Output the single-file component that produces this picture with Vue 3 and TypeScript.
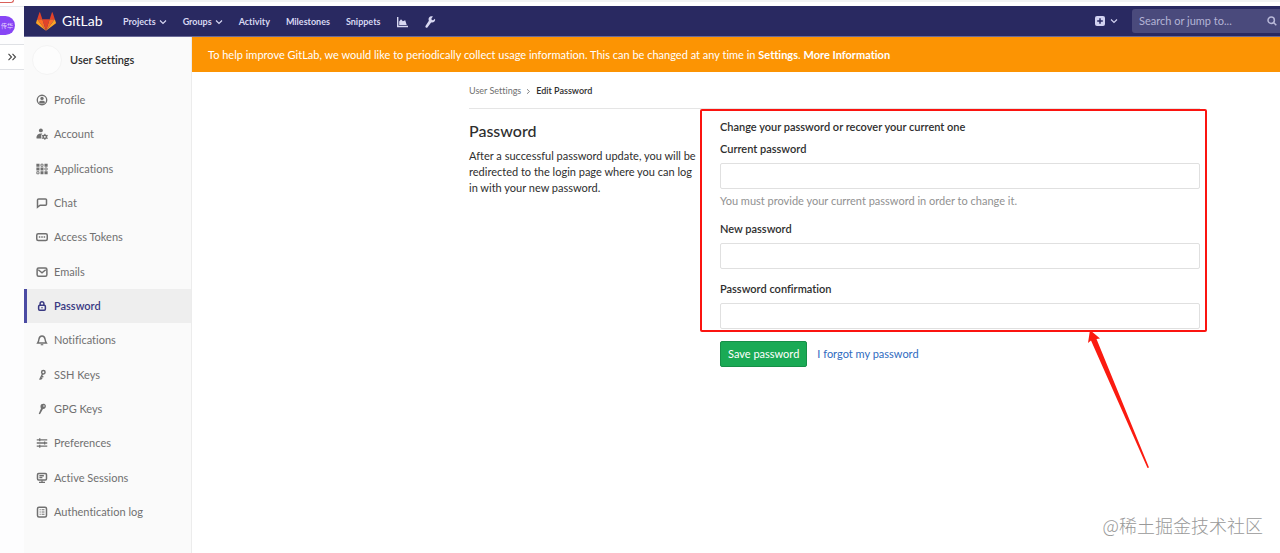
<script setup lang="ts">
import { ref } from 'vue'

interface NavItem {
  label: string
  icon: string
  active?: boolean
}

const topLinks: { label: string; menu: boolean }[] = [
  { label: 'Projects', menu: true },
  { label: 'Groups', menu: true },
  { label: 'Activity', menu: false },
  { label: 'Milestones', menu: false },
  { label: 'Snippets', menu: false },
]

const items: NavItem[] = [
  { label: 'Profile', icon: 'profile' },
  { label: 'Account', icon: 'account' },
  { label: 'Applications', icon: 'applications' },
  { label: 'Chat', icon: 'chat' },
  { label: 'Access Tokens', icon: 'token' },
  { label: 'Emails', icon: 'mail' },
  { label: 'Password', icon: 'lock', active: true },
  { label: 'Notifications', icon: 'bell' },
  { label: 'SSH Keys', icon: 'key' },
  { label: 'GPG Keys', icon: 'gpg' },
  { label: 'Preferences', icon: 'preferences' },
  { label: 'Active Sessions', icon: 'monitor' },
  { label: 'Authentication log', icon: 'log' },
]

const search = ref('')
const current = ref('')
const next = ref('')
const confirmation = ref('')
</script>

<template>
  <div class="window">
    <div class="chrome"><span class="tab"></span><span class="address"></span></div>
    <div class="body">
      <aside class="rail">
        <div class="rail-user"><span class="badge">传华</span></div>
        <button class="expand" type="button" aria-label="Expand">
          <svg width="10" height="10" viewBox="0 0 10 10" fill="none" stroke="#444" stroke-width="1.1"><path d="M1.5 1.8 4.500 5 1.500 8.200M5.500 1.800 8.500 5 5.500 8.200" /></svg>
        </button>
      </aside>
      <div class="app">
        <header class="topbar">
          <a class="brand" href="#">
            <svg width="20" height="19" viewBox="0 0 36 34">
              <path fill="#e24329" d="M18 33.5 24.6 13H11.4z" />
              <path fill="#fc6d26" d="M18 33.5 11.4 13H2.1zM18 33.5 24.6 13h9.3z" />
              <path fill="#fca326" d="M2.1 13 .1 19.2c-.2.6 0 1.2.5 1.5L18 33.5zM33.9 13l2 6.2c.2.6 0 1.2-.5 1.5L18 33.5z" />
              <path fill="#e24329" d="M2.1 13h9.3L7.4.7C7.2.1 6.300.1 6.100.7zM33.900 13h-9.300L28.600.7c.2-.6 1.100-.6 1.300 0z" />
            </svg>
            <span>GitLab</span>
          </a>
          <nav class="links">
            <a v-for="l in topLinks" :key="l.label" href="#">
              {{ l.label }}
              <svg v-if="l.menu" width="8" height="6" viewBox="0 0 8 6" fill="none" stroke="currentColor" stroke-width="1.2"><path d="M1 1.500 4 4.400 7 1.500" /></svg>
            </a>
            <a href="#" aria-label="Instance statistics">
              <svg width="12" height="11" viewBox="0 0 12 11" fill="currentColor"><path d="M1 0h1.400v8.800H12v1.400H1zM3.200 8.100V4.400L5 2.200 6.900 4.300 9.200 3.200l1.500 4.900z" /></svg>
            </a>
            <a href="#" aria-label="Admin area">
              <svg width="12" height="12" viewBox="0 0 16 16" fill="currentColor"><path d="M14.500 3.600 12.200 5.700 10.300 5.200 9.900 3.300 11.900.8C9.900-.1 7.900.3 6.800 2 5.900 3.300 5.900 5 6.500 6.300L2.200 12.900c-.6 1-.5 1.800.2 2.400.8.600 1.700.6 2.400-.3l4.700-6.400c1.600.5 3.200.1 4.400-1.300 1-1.100 1.200-2.500.6-3.700z" /></svg>
            </a>
          </nav>
          <button class="create" type="button" aria-label="New">
            <svg width="10" height="10" viewBox="0 0 10 10"><rect width="10" height="10" rx="2" fill="#d1d1f0" /><path d="M5 2.200v5.600M2.200 5h5.600" stroke="#292961" stroke-width="1.500" /></svg>
            <svg width="8" height="6" viewBox="0 0 8 6" fill="none" stroke="#d1d1f0" stroke-width="1.200"><path d="M1 1.500 4 4.400 7 1.500" /></svg>
          </button>
          <label class="search">
            <input v-model="search" type="text" placeholder="Search or jump to..." aria-label="Search or jump to" />
            <svg width="10" height="10" viewBox="0 0 10 10" fill="none" stroke="#b8b8d8" stroke-width="1.500"><circle cx="4.200" cy="4.200" r="3.200" /><path d="m6.500 6.500 2.800 2.800" /></svg>
          </label>
        </header>

        <div class="columns">
          <aside class="sidebar">
            <div class="context"><span class="avatar"></span><strong>User Settings</strong></div>
            <nav class="menu">
              <a v-for="item in items" :key="item.label" href="#" :class="{ active: item.active }">
                <svg width="12" height="12" viewBox="0 0 16 16" fill="none" stroke="currentColor" stroke-width="2">
                  <template v-if="item.icon === 'profile'">
                    <circle cx="8" cy="8" r="6.300" stroke-width="1.800" />
                    <circle cx="8" cy="5.900" r="2.200" fill="currentColor" stroke="none" />
                    <path d="M4 11.300C4.200 9.400 6 9 8 9s3.800.4 4 2.300C11 12.500 9.500 12.800 8 12.800s-3-.3-4-1.500z" fill="currentColor" stroke="none" />
                  </template>
                  <template v-else-if="item.icon === 'account'">
                    <circle cx="6.500" cy="3.200" r="2.600" fill="currentColor" stroke="none" />
                    <path d="M.5 13.500C.5 9.500 2.500 7.200 7 7.200l1.500.2C7 8.700 6.600 11 7.400 14h-6z" fill="currentColor" stroke="none" />
                    <circle cx="11.800" cy="11.800" r="2.300" />
                    <path d="M11.800 7.800v2M11.800 14v1.800M8.200 9.800l1.500.9M14 13l1.500.9M8.200 13.900l1.500-.9M14 10.700l1.500-.9" stroke-width="1.500" />
                  </template>
                  <template v-else-if="item.icon === 'applications'">
                    <path d="M.5 1h4.200v4H.5zM11.300 1h4.200v4h-4.200zM.5 6h4.200v4H.5zM6 6h4v4H6zM6 11h4v4H6zM11.300 11h4.200v4h-4.200z" fill="currentColor" stroke="none" />
                    <path d="M6.600 1.600h2.800v2.800H6.600zM11.900 6.600h2.900v2.800h-2.900zM1.100 11.600H4v2.800H1.100z" stroke-width="1.200" />
                  </template>
                  <path v-else-if="item.icon === 'chat'" d="M3.500 2.500h9.200c.8 0 1.300.5 1.300 1.300v5.900c0 .8-.5 1.300-1.300 1.300H5.500L2 13.700V4c0-.9.600-1.500 1.500-1.500z" />
                  <template v-else-if="item.icon === 'token'">
                    <rect x="1" y="3.500" width="14" height="9" rx="2" />
                    <path d="M3.800 8h2M7 8h2M10.200 8h2" />
                  </template>
                  <template v-else-if="item.icon === 'mail'">
                    <rect x="1.500" y="2.500" width="13" height="11" rx="2" />
                    <path d="m3 5 5 4 5-4" />
                  </template>
                  <template v-else-if="item.icon === 'lock'">
                    <rect x="3.500" y="7" width="9" height="6.500" rx="1.500" />
                    <path d="M5.500 7V4.700a2.500 2.500 0 0 1 5 0V7M8 9.500v1.500" />
                  </template>
                  <template v-else-if="item.icon === 'bell'">
                    <path d="M2.300 12c1-1.500 1.300-3 1.600-5C4.300 4.300 5.800 2.800 8 2.800s3.700 1.500 4.100 4.200c.3 2 .6 3.500 1.600 5z" />
                    <path d="M6.300 14.300h3.400" stroke-width="1.500" />
                  </template>
                  <template v-else-if="item.icon === 'key'">
                    <circle cx="9.800" cy="4.300" r="2.300" />
                    <path d="M8.700 6.700 5 14.300M7.300 9.500l2.500 1.300M6.100 12l2.100 1.100" />
                  </template>
                  <template v-else-if="item.icon === 'gpg'">
                    <path d="M7.200 1.800c2-1.500 5.200-1 5.900 1.400.6 2.500-1.200 4.900-3.800 4.800L5.300 14.900 3.600 14.200l3-6.900C5.700 5.200 5.700 3 7.200 1.800z" fill="currentColor" stroke="none" />
                    <circle cx="10.600" cy="4" r="1" fill="#fafafa" stroke="none" />
                  </template>
                  <path v-else-if="item.icon === 'preferences'" d="M1 3.700h14M1 8h14M1 12.300h14M5 1.700v4M11.500 6v4M5 10.300v4" stroke-width="1.700" />
                  <template v-else-if="item.icon === 'monitor'">
                    <rect x="2" y="2" width="12" height="8.500" rx="1.500" />
                    <path d="M4.500 5h6M4.500 7.400h4M8 11v2.500M4 13.700h8" stroke-width="1.700" />
                  </template>
                  <template v-else>
                    <rect x="2" y="1.500" width="12" height="13" rx="2" />
                    <path d="M4.800 5h1.500M7.500 5h3.800M4.800 8h1.500M7.500 8h3.800M4.800 11h1.500M7.500 11h3.800" stroke-width="1.600" />
                  </template>
                </svg>
                <span>{{ item.label }}</span>
              </a>
            </nav>
          </aside>

          <main class="main">
            <div class="banner">
              To help improve GitLab, we would like to periodically collect usage information. This can be changed at any time in
              <a href="#">Settings</a>. <a href="#">More Information</a>
            </div>
            <div class="content">
              <nav class="crumbs" aria-label="Breadcrumb">
                <a href="#">User Settings</a>
                <svg width="5" height="7" viewBox="0 0 5 7" fill="none" stroke="#888"><path d="M1 1.200 3.500 3.500 1 5.800" /></svg>
                <strong>Edit Password</strong>
              </nav>
              <div class="split">
                <section class="intro">
                  <h1>Password</h1>
                  <p>After a successful password update, you will be redirected to the login page where you can log in with your new password.</p>
                </section>
                <form class="form" @submit.prevent>
                  <div class="fields">
                    <h2>Change your password or recover your current one</h2>
                    <div class="field">
                      <label for="current">Current password</label>
                      <input id="current" v-model="current" type="password" />
                      <small>You must provide your current password in order to change it.</small>
                    </div>
                    <div class="field">
                      <label for="new">New password</label>
                      <input id="new" v-model="next" type="password" />
                    </div>
                    <div class="field">
                      <label for="confirmation">Password confirmation</label>
                      <input id="confirmation" v-model="confirmation" type="password" />
                    </div>
                    <div class="marker">
                      <svg class="arrow" width="64" height="140" viewBox="0 0 64 140" fill="#fb1b10"><path d="M4 0 14 8.500 10.500 9 63 137.500 61.500 138 5 10.500 2 13z" /></svg>
                    </div>
                  </div>
                  <div class="actions">
                    <button class="save" type="submit">Save password</button>
                    <a href="#">I forgot my password</a>
                  </div>
                </form>
              </div>
            </div>
          </main>
        </div>
      </div>
    </div>
    <div class="watermark">@稀土掘金技术社区</div>
  </div>
</template>

<style>
body {
  margin: 0;
}
</style>

<style scoped>
* {
  box-sizing: border-box;
}
.window {
  position: relative;
  display: flex;
  flex-direction: column;
  min-height: 100vh;
  overflow: hidden;
  background: #fff;
  color: #2e2e2e;
  font: 11px/16px Lato, "Noto Sans", "Noto Sans CJK SC", sans-serif;
  font-variant-ligatures: none;
}
a {
  color: inherit;
  text-decoration: none;
}
button,
input {
  font: inherit;
}
svg {
  flex: none;
}
.chrome {
  display: flex;
  height: 6px;
}
.tab {
  width: 14px;
  height: 3px;
  border: solid #d9605a;
  border-width: 0 1px 1px 0;
  border-radius: 0 0 4px 0;
}
.address {
  flex: 1;
  height: 2px;
  margin-left: 96px;
  background: #f1f3f4;
}
.body {
  display: flex;
  flex: 1;
}
.rail {
  width: 24px;
  border-top: 1px solid #e6e8ec;
  background: #fdfdfe;
}
.rail-user {
  display: flex;
  align-items: center;
  height: 37px;
}
.badge {
  display: flex;
  align-items: center;
  justify-content: flex-end;
  width: 15px;
  height: 19px;
  padding-right: 2px;
  border-radius: 0 10px 10px 0;
  background: #8745f5;
  color: #e6d8ff;
  font-size: 6px;
  white-space: nowrap;
}
.expand {
  display: flex;
  align-items: center;
  justify-content: flex-end;
  width: 100%;
  height: 26px;
  padding: 0 7px 0 0;
  border: solid #dfe1e5;
  border-width: 1px 0;
  background: #fff;
}
.app {
  display: flex;
  flex: 1;
  flex-direction: column;
  min-width: 0;
}
.topbar {
  display: flex;
  align-items: center;
  height: 31px;
  padding-left: 12px;
  border-bottom: 1px solid #6a6a98;
  background: #292961;
  color: #d8d8f2;
}
.brand {
  display: flex;
  align-items: center;
  gap: 6px;
  width: 87px;
  color: #fff;
  font-size: 14px;
}
.links {
  display: flex;
  flex: 1;
  align-items: center;
  gap: 16px;
  padding-top: 2px;
  font-size: 9px;
  font-weight: 700;
}
.links a {
  display: flex;
  align-items: center;
  gap: 3px;
}
.create {
  display: flex;
  align-items: center;
  gap: 5px;
  margin-right: 14px;
  padding: 0;
  border: 0;
  background: none;
}
.search {
  display: flex;
  align-items: center;
  width: 148px;
  height: 24px;
  padding: 0 3px 0 7px;
  border-radius: 3px 0 0 3px;
  background: #4a4a7c;
}
.search input {
  flex: 1;
  min-width: 0;
  padding: 0;
  border: 0;
  outline: 0;
  background: none;
  color: #fff;
}
.search input::placeholder {
  color: #b4b4d6;
  opacity: 1;
}
.columns {
  display: flex;
  flex: 1;
}
.sidebar {
  width: 168px;
  border-right: 1px solid #ececec;
  background: #fafafa;
}
.context {
  display: flex;
  align-items: center;
  gap: 8px;
  height: 46px;
  padding-left: 8px;
}
.context strong {
  font-weight: 600;
}
.avatar {
  width: 30px;
  height: 30px;
  border: 1px solid #f4f4f4;
  border-radius: 50%;
  background: #fdfdfd;
}
.menu {
  display: grid;
  grid-auto-rows: 1fr;
  height: 446px;
}
.menu a {
  display: flex;
  align-items: center;
  gap: 6px;
  padding-left: 12px;
  color: #707070;
}
.menu a.active {
  padding-left: 9px;
  border-left: 3px solid #4b4ba3;
  background: #eee;
  color: #393982;
  font-weight: 600;
}
.main {
  flex: 1;
  min-width: 0;
}
.banner {
  height: 35px;
  padding: 10px 16px;
  background: #fc9403;
  color: #fff;
  white-space: nowrap;
}
.banner a {
  font-weight: 700;
}
.content {
  padding: 0 80px 0 277px;
}
.crumbs {
  display: flex;
  align-items: center;
  gap: 5px;
  height: 37px;
  padding-top: 2px;
  border-bottom: 1px solid #e5e5e5;
  color: #707070;
  font-size: 9px;
}
.crumbs strong {
  color: #2e2e2e;
  font-weight: 600;
}
.split {
  display: flex;
  gap: 20px;
}
.intro {
  width: 231px;
}
.intro h1 {
  margin: 13px 0 8px;
  font-size: 16px;
  font-weight: 500;
  line-height: 18px;
}
.intro p {
  margin: 0;
}
.form {
  flex: 1;
  padding-top: 10px;
}
.fields {
  position: relative;
  display: flex;
  flex-direction: column;
  gap: 12px;
}
.fields h2 {
  margin: 0 0 -6px;
  font-size: 11px;
  font-weight: 600;
}
.field {
  display: flex;
  flex-direction: column;
}
.field label {
  font-weight: 600;
}
.field input {
  width: 100%;
  height: 26px;
  margin-top: 6px;
  padding: 0 8px;
  border: 1px solid #e0e0e0;
  border-radius: 2px;
  background: #fff;
}
.field small {
  margin-top: 4px;
  color: #919191;
  font-size: 11px;
}
.marker {
  position: absolute;
  inset: -10px -7px -3px -20px;
  border: 2px solid #fb1410;
  border-radius: 2px;
  pointer-events: none;
}
.arrow {
  position: absolute;
  top: 100%;
  right: 55px;
}
.actions {
  display: flex;
  align-items: center;
  gap: 10px;
  margin-top: 12px;
  color: #2f6bc0;
}
.save {
  height: 26px;
  padding: 0 7px;
  border: 1px solid #168f48;
  border-radius: 2px;
  background: #1aaa55;
  color: #fff;
}
.watermark {
  position: absolute;
  right: 17px;
  bottom: 16px;
  color: #999;
  font: 300 18px/24px "Noto Sans CJK SC", sans-serif;
}
</style>
